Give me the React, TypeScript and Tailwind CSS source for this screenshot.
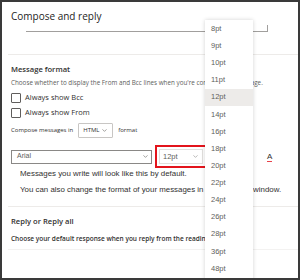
import { ChevronDown } from "lucide-react";

const sizes = ["8pt", "9pt", "10pt", "11pt", "12pt", "14pt", "16pt", "18pt", "20pt", "22pt", "24pt", "26pt", "28pt", "36pt", "48pt"];

const Check = ({ label }: { label: string }) => (
  <div className="flex items-center gap-[4px] h-[10px]">
    <div className="w-[10px] h-[10px] border border-[#605e5c] rounded-[1px]" />
    <span className="text-[7.5px] text-[#323130]">{label}</span>
  </div>
);

export default function App() {
  return (
    <div className="relative w-[300px] h-[280px] overflow-hidden bg-white border-2 border-[#3a3a3a] font-['Open_Sans',sans-serif] text-[#323130]">
      <div className="pl-[9px]">
        {/* Titulo */}
        <h1 className="pt-[5px] text-[10px] leading-[18px] text-[#252423]">Compose and reply</h1>
        <div className="ml-[15px] w-[242px] h-[7px] border-b border-r border-[#a19f9d]" />
        <div className="mt-[22px] -ml-[3px] border-t border-[#edebe9]" />

        {/* Formato */}
        <h2 className="mt-[7px] text-[7.6px] leading-[14px] font-semibold">Message format</h2>
        <p className="mt-[2px] text-[6.3px] leading-[10px] text-[#605e5c] whitespace-nowrap">
          Choose whether to display the From and Bcc lines when you're composing a message.
        </p>
        <div className="mt-[5px] flex flex-col gap-[5px]">
          <Check label="Always show Bcc" />
          <Check label="Always show From" />
        </div>
        <div className="mt-[5px] flex items-center h-[15px] text-[6px]">
          <span>Compose messages in</span>
          <div className="ml-[5px] w-[35px] h-[15px] border border-[#c8c6c4] rounded-[1px] flex items-center justify-between px-[4px]">
            <span>HTML</span>
            <ChevronDown className="w-[7px] h-[7px] text-[#605e5c]" />
          </div>
          <span className="ml-[5px]">format</span>
        </div>

        {/* Fuente */}
        <div className="mt-[7px] flex items-center h-[23px]">
          <div className="w-[141px] h-[14px] border border-[#8a8886] flex items-center justify-between pl-[5px] pr-[2px] text-[7px] text-[#605e5c] font-['Liberation_Sans',sans-serif]">
            <span>Arial</span>
            <ChevronDown className="w-[7px] h-[7px]" />
          </div>
          <div className="ml-[3px] w-[52px] h-[23px] border-2 border-[#e3141c] p-[2px]">
            <div className="h-full flex items-center justify-between pl-[3px] pr-[3px] text-[7.5px] text-[#605e5c] font-['Liberation_Sans',sans-serif] border border-[#e1dfdd]">
              <span>12pt</span>
              <ChevronDown className="w-[7px] h-[7px] text-[#8a8886]" />
            </div>
          </div>
          <span className="ml-[60px] text-[8px] leading-[9px] border-b border-[#e8414a] text-[#323130] font-['Liberation_Sans',sans-serif]">A</span>
        </div>
        <div className="pl-[9px] font-['Liberation_Sans',sans-serif] text-[7.9px] whitespace-nowrap">
          <p className="leading-[12px]">Messages you write will look like this by default.</p>
          <p className="mt-[4px] leading-[12px]">You can also change the format of your messages in the message window.</p>
        </div>
        <div className="mt-[10px] -ml-[3px] border-t border-[#edebe9]" />

        {/* Responder */}
        <h2 className="mt-[7px] text-[7.6px] leading-[14px] font-semibold">Reply or Reply all</h2>
        <p className="mt-[6px] text-[6.5px] leading-[10px] font-semibold whitespace-nowrap">
          Choose your default response when you reply from the reading pane.
        </p>
        <div className="mt-[5px] -ml-[3px] border-t border-[#f3f2f1]" />
      </div>

      {/* Lista desplegable */}
      <div className="absolute left-[203px] top-[18px] w-[48px] h-[270px] bg-white shadow-[0_0_4px_rgba(0,0,0,0.18)] font-['Liberation_Sans',sans-serif]">
        {sizes.map((s) => (
          <div
            key={s}
            className={`h-[17.14px] flex items-center pl-[6px] text-[7.5px] text-[#605e5c] ${s === "12pt" ? "bg-[#edebe9]" : ""}`}
          >
            {s}
          </div>
        ))}
      </div>
    </div>
  );
}
